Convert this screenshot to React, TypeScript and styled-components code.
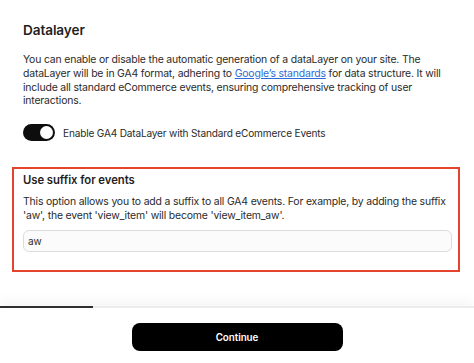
import React from "react";
import styled, { createGlobalStyle } from "styled-components";

const GlobalStyle = createGlobalStyle`
  html, body { margin: 0; padding: 0; background: #ffffff; }
  body { font-family: Inter, "Noto Sans", Arial, sans-serif; color: #262626; -webkit-font-smoothing: antialiased; }
  * { box-sizing: border-box; }
`;

const Page = styled.div`
  width: 474px;
  height: 363px;
  display: flex;
  flex-direction: column;
  overflow: hidden;
`;

const Main = styled.main`
  flex: 1;
  padding: 20px 22px 0 23px;
  display: flex;
  flex-direction: column;
`;

const Title = styled.h2`
  margin: 0;
  font-size: 13.6px;
  line-height: 20px;
  font-weight: 600;
  letter-spacing: -0.1px;
  color: #1f1f1f;
`;

const Paragraph = styled.p<{ $mt?: number }>`
  margin: ${(p) => p.$mt ?? 0}px 0 0;
  font-size: 10.45px;
  line-height: 13.75px;
  letter-spacing: -0.18px;
  font-weight: 400;
  color: #2b2b2b;
`;

const Link = styled.a`
  color: #2f6bd6;
  text-decoration: underline;
  text-underline-offset: 1px;
`;

const ToggleRow = styled.label`
  margin-top: 16px;
  display: flex;
  align-items: center;
  gap: 8px;
  font-size: 10.1px;
  letter-spacing: -0.18px;
  color: #2b2b2b;
`;

const Switch = styled.span<{ $on: boolean }>`
  width: 32px;
  height: 17px;
  border-radius: 9px;
  background: ${(p) => (p.$on ? "#0d0d0d" : "#d4d4d4")};
  display: flex;
  align-items: center;
  justify-content: ${(p) => (p.$on ? "flex-end" : "flex-start")};
  padding: 0 2px;
  flex-shrink: 0;
`;

const Knob = styled.span`
  width: 13px;
  height: 13px;
  border-radius: 50%;
  background: #ffffff;
`;

const Highlight = styled.section`
  margin: 26px -8px 0 -11px;
  border: 2px solid #e4432d;
  padding: 3px 6px 18px 9px;
  display: flex;
  flex-direction: column;
`;

const SubTitle = styled.h3`
  margin: 0;
  font-size: 11.3px;
  line-height: 16px;
  font-weight: 600;
  letter-spacing: -0.05px;
  color: #1f1f1f;
`;

const Input = styled.input`
  margin-top: 7px;
  height: 22px;
  width: 100%;
  border: 1px solid #dcdcdc;
  border-radius: 6px;
  background: #fbfbfb;
  padding: 0 4px;
  font-family: inherit;
  font-size: 10px;
  color: #2e2e2e;
  outline: none;
`;

const Footer = styled.footer`
  display: flex;
  flex-direction: column;
  align-items: center;
  box-shadow: 0 -6px 10px rgba(0, 0, 0, 0.035);
  padding-bottom: 12px;
`;

const Track = styled.div`
  width: 100%;
  height: 2px;
  background: #ececec;
  display: flex;
`;

const Fill = styled.div`
  height: 100%;
  background: #2f2f2f;
`;

const Button = styled.button`
  margin-top: 15px;
  width: 211px;
  height: 28px;
  border: none;
  border-radius: 8px;
  background: #000000;
  color: #ffffff;
  font-family: inherit;
  font-size: 9.8px;
  font-weight: 600;
  letter-spacing: -0.05px;
  cursor: pointer;
`;

export default function App() {
  const step = 1;
  const total = 5.1;
  return (
    <Page>
      <GlobalStyle />
      <Main>
        <Title>Datalayer</Title>
        <Paragraph $mt={13}>
          You can enable or disable the automatic generation of a dataLayer on your site. The
          dataLayer will be in GA4 format, adhering to <Link href="#">Google’s standards</Link> for
          data structure. It will include all standard eCommerce events, ensuring comprehensive
          tracking of user interactions.
        </Paragraph>
        <ToggleRow>
          <Switch $on>
            <Knob />
          </Switch>
          Enable GA4 DataLayer with Standard eCommerce Events
        </ToggleRow>
        <Highlight>
          <SubTitle>Use suffix for events</SubTitle>
          <Paragraph $mt={7}>
            This option allows you to add a suffix to all GA4 events. For example, by adding the
            suffix 'aw', the event 'view_item' will become 'view_item_aw'.
          </Paragraph>
          <Input defaultValue="aw" />
        </Highlight>
      </Main>
      <Footer>
        <Track>
          <Fill style={{ width: `${(step / total) * 100}%` }} />
        </Track>
        <Button>Continue</Button>
      </Footer>
    </Page>
  );
}
